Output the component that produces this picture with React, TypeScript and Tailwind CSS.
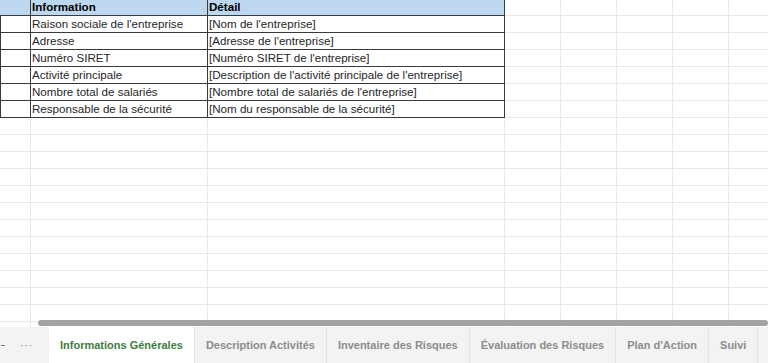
const rows: [string, string][] = [
  ["Raison sociale de l'entreprise", "[Nom de l'entreprise]"],
  ["Adresse", "[Adresse de l'entreprise]"],
  ["Numéro SIRET", "[Numéro SIRET de l'entreprise]"],
  ["Activité principale", "[Description de l'activité principale de l'entreprise]"],
  ["Nombre total de salariés", "[Nombre total de salariés de l'entreprise]"],
  ["Responsable de la sécurité", "[Nom du responsable de la sécurité]"],
];

const tabs = [
  "Informations Générales",
  "Description Activités",
  "Inventaire des Risques",
  "Évaluation des Risques",
  "Plan d'Action",
  "Suivi",
];

const extraCols = [0, 1, 2, 3, 4];

function GridTail() {
  return (
    <>
      {extraCols.map((i) => (
        <div key={i} className="h-full w-[56px] shrink-0 border-r border-b border-[#e9e9e9]" />
      ))}
    </>
  );
}

export default function App() {
  return (
    <div
      className="flex h-[363px] w-[768px] flex-col overflow-hidden bg-white text-[11px] text-[#262626]"
      style={{ fontFamily: "'Liberation Sans', Arial, sans-serif" }}
    >
      <div className="relative h-[327px] shrink-0 overflow-hidden text-[11.6px]">
        {/* header row */}
        <div className="flex h-[16px]">
          <div className="w-[31px] shrink-0 border-r border-b border-[#3a3a3a] bg-[#bdd7ee]" />
          <div className="w-[177px] shrink-0 border-r border-b border-[#3a3a3a] bg-[#bdd7ee] pl-[1px] font-bold leading-[13px] text-black">
            Information
          </div>
          <div className="w-[297px] shrink-0 border-r border-b border-[#3a3a3a] bg-[#bdd7ee] pl-[1px] font-bold leading-[13px] text-black">
            Détail
          </div>
          <GridTail />
        </div>

        {rows.map(([label, value]) => (
          <div key={label} className="flex h-[17px]">
            <div className="w-[31px] shrink-0 border-r border-b border-l border-[#3a3a3a]" />
            <div className="w-[177px] shrink-0 truncate border-r border-b border-[#3a3a3a] pl-[1px] leading-[16px]">
              {label}
            </div>
            <div className="w-[297px] shrink-0 truncate border-r border-b border-[#3a3a3a] pl-[1px] leading-[16px]">
              {value}
            </div>
            <GridTail />
          </div>
        ))}

        {Array.from({ length: 13 }).map((_, i) => (
          <div key={i} className="flex h-[17px]">
            <div className="w-[31px] shrink-0 border-r border-b border-[#e9e9e9]" />
            <div className="w-[177px] shrink-0 border-r border-b border-[#e9e9e9]" />
            <div className="w-[297px] shrink-0 border-r border-b border-[#e9e9e9]" />
            <GridTail />
          </div>
        ))}

        {/* horizontal scrollbar */}
        <div className="absolute bottom-[1px] left-[38px] right-0 h-[6px] rounded-full bg-[#a3a3a3]" />
      </div>

      <div className="flex flex-1 items-stretch bg-[#f3f3f3]">
        <div className="flex w-[49px] shrink-0 items-center text-[#777]">
          <span className="ml-[1px] block h-[1px] w-[4px] bg-[#777]" />
          <span className="ml-[15px] text-[10px] tracking-[1px]">···</span>
        </div>
        {tabs.map((t, i) => (
          <div
            key={t}
            className={
              i === 0
                ? "flex items-center bg-white px-[11px] font-bold text-[#3e7d3e]"
                : "flex items-center border-l border-[#e2e2e2] px-[11px] font-bold text-[#8c8c8c]"
            }
          >
            {t}
          </div>
        ))}
        <div className="border-l border-[#e2e2e2]" />
      </div>
    </div>
  );
}
